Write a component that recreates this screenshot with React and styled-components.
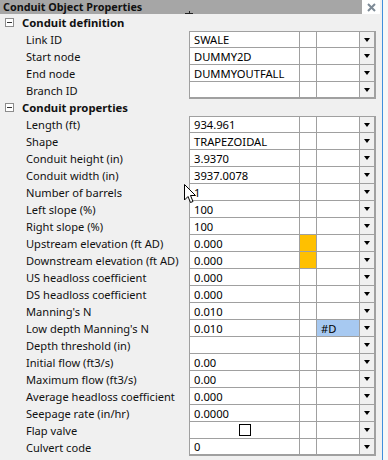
import React from "react";
import styled, { createGlobalStyle } from "styled-components";

const GlobalStyle = createGlobalStyle`
  html, body {
    margin: 0;
    padding: 0;
    background: #f0f0f0;
  }
  body {
    font-family: "Noto Sans", "Open Sans", sans-serif;
    color: #000;
  }
  * {
    box-sizing: border-box;
  }
`;

const LINE = "#a0a0a0";

// Window frame
const Window = styled.div`
  display: flex;
  width: 388px;
  height: 460px;
  overflow: hidden;
  position: relative;
`;

const Panel = styled.div`
  width: 382px;
  display: flex;
  flex-direction: column;
  background: #f0f0f0;
`;

const EdgeLine = styled.div`
  width: 1px;
  background: #3f8fdc;
`;

const Outside = styled.div`
  flex: 1;
  background: #f7f7f7;
`;

// Title bar
const TitleBar = styled.div`
  display: flex;
  height: 14px;
  position: relative;
`;

const TitleText = styled.div`
  flex: 1;
  background: #a6a6a6;
  font-weight: 700;
  font-size: 10.8px;
  line-height: 14px;
  padding-left: 3px;
  color: #111;
  white-space: nowrap;
`;

const CloseBox = styled.div`
  width: 18px;
  margin-right: 2px;
  background: #fff;
  display: flex;
  align-items: center;
  justify-content: center;
`;

const Tick = styled.div`
  position: absolute;
  left: 185px;
  top: 11px;
  width: 8px;
  height: 3px;
  border-bottom: 1px solid #222;
  &::after {
    content: "";
    position: absolute;
    left: 4px;
    top: 0;
    height: 3px;
    border-left: 1px solid #222;
  }
`;

// Sections
const Header = styled.div`
  display: flex;
  align-items: center;
  height: 17px;
  gap: 8px;
  padding-left: 5px;
  font-weight: 700;
  font-size: 11.3px;
  color: #111;
`;

const MinusBox = styled.div`
  width: 9px;
  height: 9px;
  border: 1px solid #8c8c8c;
  background: #fff;
  position: relative;
  &::after {
    content: "";
    position: absolute;
    left: 1px;
    right: 1px;
    top: 3px;
    border-top: 1px solid #333;
  }
`;

const Rows = styled.div`
  display: flex;
  flex-direction: column;
`;

const Cell = styled.div`
  height: 17px;
  border-bottom: 1px solid ${LINE};
  border-right: 1px solid ${LINE};
  background: ${(p) => p.$bg || "#fff"};
  display: flex;
  align-items: center;
  justify-content: ${(p) => (p.$center ? "center" : "flex-start")};
  padding-left: 4px;
  font-size: 11.2px;
  white-space: nowrap;
  overflow: hidden;
`;

const FirstCell = styled(Cell)`
  border-left: 1px solid ${LINE};
`;

const DropCell = styled.div`
  height: 17px;
  border-bottom: 1px solid ${LINE};
  border-right: 2px solid ${LINE};
  background: #f0f0f0;
  display: flex;
  align-items: center;
  justify-content: center;
`;

const Label = styled.div`
  height: 17px;
  line-height: 17px;
  padding-left: 26px;
  font-size: 11.1px;
  color: #111;
  white-space: nowrap;
`;

const Row = styled.div`
  display: grid;
  grid-template-columns: 189px 111px 17px 43px 16px;

  &:first-child > ${Cell}, &:first-child > ${DropCell} {
    border-top: 1px solid ${LINE};
  }
  &:first-child > ${Label} {
    line-height: 18px;
  }
  &:last-child > ${Cell}, &:last-child > ${DropCell} {
    border-bottom-width: 2px;
  }
`;

const Arrow = styled.div`
  width: 0;
  height: 0;
  border-left: 3.5px solid transparent;
  border-right: 3.5px solid transparent;
  border-top: 4px solid #000;
`;

const CheckBox = styled.div`
  width: 12px;
  height: 12px;
  border: 1px solid #000;
  background: #fff;
  margin-left: -4px;
`;

const Cursor = styled.svg`
  position: absolute;
  left: 184px;
  top: 184px;
`;

const definition = [
  { label: "Link ID", value: "SWALE" },
  { label: "Start node", value: "DUMMY2D" },
  { label: "End node", value: "DUMMYOUTFALL" },
  { label: "Branch ID", value: "" },
];

const properties = [
  { label: "Length (ft)", value: "934.961" },
  { label: "Shape", value: "TRAPEZOIDAL" },
  { label: "Conduit height (in)", value: "3.9370" },
  { label: "Conduit width (in)", value: "3937.0078" },
  { label: "Number of barrels", value: "1" },
  { label: "Left slope (%)", value: "100" },
  { label: "Right slope (%)", value: "100" },
  { label: "Upstream elevation (ft AD)", value: "0.000", flag: "#ffc000" },
  { label: "Downstream elevation (ft AD)", value: "0.000", flag: "#ffc000" },
  { label: "US headloss coefficient", value: "0.000" },
  { label: "DS headloss coefficient", value: "0.000" },
  { label: "Manning's N", value: "0.010" },
  { label: "Low depth Manning's N", value: "0.010", note: "#D", noteBg: "#a7c9f1" },
  { label: "Depth threshold (in)", value: "" },
  { label: "Initial flow (ft3/s)", value: "0.00" },
  { label: "Maximum flow (ft3/s)", value: "0.00" },
  { label: "Average headloss coefficient", value: "0.000" },
  { label: "Seepage rate (in/hr)", value: "0.0000" },
  { label: "Flap valve", check: true },
  { label: "Culvert code", value: "0" },
];

function Section({ title, items }) {
  return (
    <>
      <Header>
        <MinusBox />
        {title}
      </Header>
      <Rows>
        {items.map((it) => (
          <Row key={it.label}>
            <Label>{it.label}</Label>
            <FirstCell $center={it.check}>
              {it.check ? <CheckBox /> : it.value}
            </FirstCell>
            <Cell $bg={it.flag} />
            <Cell $bg={it.noteBg}>{it.note}</Cell>
            <DropCell>
              <Arrow />
            </DropCell>
          </Row>
        ))}
      </Rows>
    </>
  );
}

export default function App() {
  return (
    <>
      <GlobalStyle />
      <Window>
        <Panel>
          <TitleBar>
            <TitleText>Conduit Object Properties</TitleText>
            <CloseBox>
              <svg width="9" height="9" viewBox="0 0 9 9">
                <path d="M1 1 L8 8 M8 1 L1 8" stroke="#7d8a96" strokeWidth="2" />
              </svg>
            </CloseBox>
            <Tick />
          </TitleBar>
          <Section title="Conduit definition" items={definition} />
          <Section title="Conduit properties" items={properties} />
        </Panel>
        <EdgeLine />
        <Outside />
        <Cursor width="13" height="20" viewBox="0 0 13 20">
          <path
            d="M0.5 0.5 L0.5 16 L4 12.5 L6.5 18.5 L9 17.5 L6.5 11.5 L11.5 11.5 Z"
            fill="#fff"
            stroke="#000"
            strokeWidth="1"
          />
        </Cursor>
      </Window>
    </>
  );
}
